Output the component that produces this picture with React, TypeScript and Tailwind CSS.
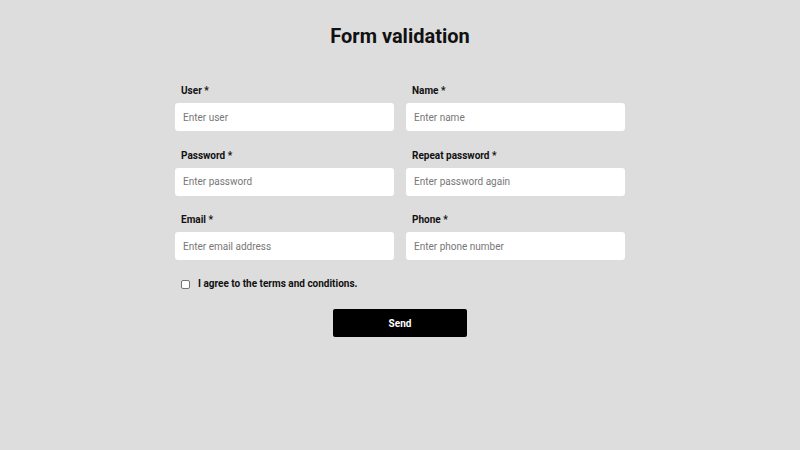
const fields = [
  [
    { label: "User *", placeholder: "Enter user", type: "text" },
    { label: "Name *", placeholder: "Enter name", type: "text" },
  ],
  [
    { label: "Password *", placeholder: "Enter password", type: "password" },
    { label: "Repeat password *", placeholder: "Enter password again", type: "password" },
  ],
  [
    { label: "Email *", placeholder: "Enter email address", type: "email" },
    { label: "Phone *", placeholder: "Enter phone number", type: "tel" },
  ],
];

export default function App() {
  return (
    <div className="min-h-[450px] w-full bg-[#dddddd] pt-[24px] font-['Roboto','Liberation_Sans',sans-serif] text-[#111]">
      <h1 className="text-center text-[20px] leading-[24px] font-bold">Form validation</h1>

      <form className="mx-auto mt-[37px] w-[450px]" onSubmit={(e) => e.preventDefault()}>
        <div className="flex flex-col gap-[18.5px]">
          {fields.map((row, i) => (
            <div key={i} className="grid grid-cols-2 gap-x-[12px]">
              {row.map((f) => (
                <Field key={f.label} {...f} />
              ))}
            </div>
          ))}
        </div>

        <label className="mt-[18px] flex items-center gap-[8px] pl-[6px] text-[10px] leading-[12px] font-bold">
          <span className="h-[9px] w-[9px] rounded-[2px] border border-[#767676] bg-white" />
          I agree to the terms and conditions.
        </label>

        <div className="mt-[19px] flex justify-center">
          <button
            type="submit"
            className="h-[28px] w-[134px] rounded-[2px] bg-black text-[10px] font-bold text-white"
          >
            Send
          </button>
        </div>
      </form>
    </div>
  );
}

function Field({ label, placeholder, type }: { label: string; placeholder: string; type: string }) {
  return (
    <div className="flex flex-col">
      <span className="pl-[6px] text-[10px] leading-[12px] font-bold">{label}</span>
      <input
        type={type}
        placeholder={placeholder}
        className="mt-[6px] h-[28px] rounded-[3px] bg-white px-[8px] text-[10px] outline-none placeholder:text-[#777]"
      />
    </div>
  );
}
